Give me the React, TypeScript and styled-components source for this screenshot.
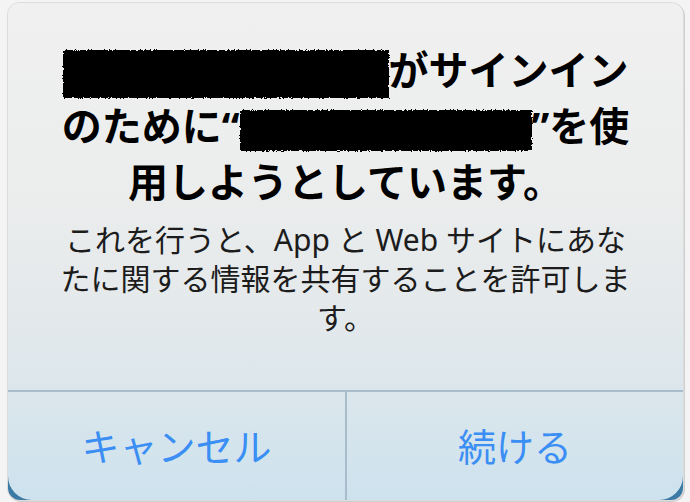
import styled, { createGlobalStyle } from "styled-components";

const GlobalStyle = createGlobalStyle`
  html, body {
    margin: 0;
    background: #f4f4f4;
  }
  body {
    font-family: "Noto Sans", "Noto Sans CJK JP", sans-serif;
  }
`;

const Page = styled.div`
  width: 690px;
  height: 502px;
  box-sizing: border-box;
  padding: 3px 7px 2px 8px;
`;

const Dialog = styled.div`
  height: 100%;
  border-radius: 12px;
  overflow: hidden;
  background: linear-gradient(to bottom, #eeeeee 0 90%, #3a7aa4 90%);
  box-shadow: 0 0 0 1px #dcdcdc, 1px 1px 0 1px #cfcfcf;
  display: flex;
`;

const Panel = styled.div`
  flex: 1;
  display: flex;
  flex-direction: column;
  border-radius: 11px 11px 24px 24px;
  overflow: hidden;
  background: linear-gradient(
    to bottom,
    #f0f0f0 0%,
    #eceded 35%,
    #e4e9eb 62%,
    #dae6ec 80%,
    #cde2ee 100%
  );
`;

const Body = styled.div`
  height: 387px;
  box-sizing: border-box;
  padding-top: 39px;
  text-align: center;
`;

const Title = styled.h1`
  margin: 0;
  font-size: 40px;
  line-height: 56px;
  font-weight: 700;
  color: #000;
`;

const Redact = styled.span<{ $w: number; $h: number }>`
  display: inline-block;
  width: ${(p) => p.$w}px;
  height: ${(p) => p.$h}px;
  background: #000;
  vertical-align: middle;
  filter: url(#rough);
`;

const Message = styled.p`
  margin: 10px 0 0;
  font-size: 30px;
  line-height: 39px;
  font-weight: 400;
  color: #1c1c1c;
`;

const Actions = styled.div`
  flex: 1;
  display: grid;
  grid-template-columns: 337px 1fr;
  border-top: 2px solid #a8bdcb;
`;

const Action = styled.button<{ $divider?: boolean }>`
  border: none;
  border-left: ${(p) => (p.$divider ? "2px solid #a8bdcb" : "none")};
  background: transparent;
  font-family: "Noto Sans CJK JP", sans-serif;
  font-size: 38px;
  font-weight: 400;
  color: #3b8ef3;
  padding: 0 0 4px;
  cursor: pointer;
`;

export default function App() {
  return (
    <>
      <GlobalStyle />
      <svg width="0" height="0" style={{ position: "absolute" }}>
        <filter id="rough">
          <feTurbulence type="fractalNoise" baseFrequency="0.6" numOctaves="2" />
          <feDisplacementMap in="SourceGraphic" scale="4" />
        </filter>
      </svg>
      <Page>
        <Dialog>
          <Panel>
            <Body>
              <Title>
                <Redact $w={326} $h={48} />
                がサインイン
                <br />
                のために“<Redact $w={292} $h={41} />”を使
                <br />
                用しようとしています。
              </Title>
              <Message>
                これを行うと、App と Web サイトにあな
                <br />
                たに関する情報を共有することを許可しま
                <br />
                す。
              </Message>
            </Body>
            <Actions>
              <Action>キャンセル</Action>
              <Action $divider>続ける</Action>
            </Actions>
          </Panel>
        </Dialog>
      </Page>
    </>
  );
}
